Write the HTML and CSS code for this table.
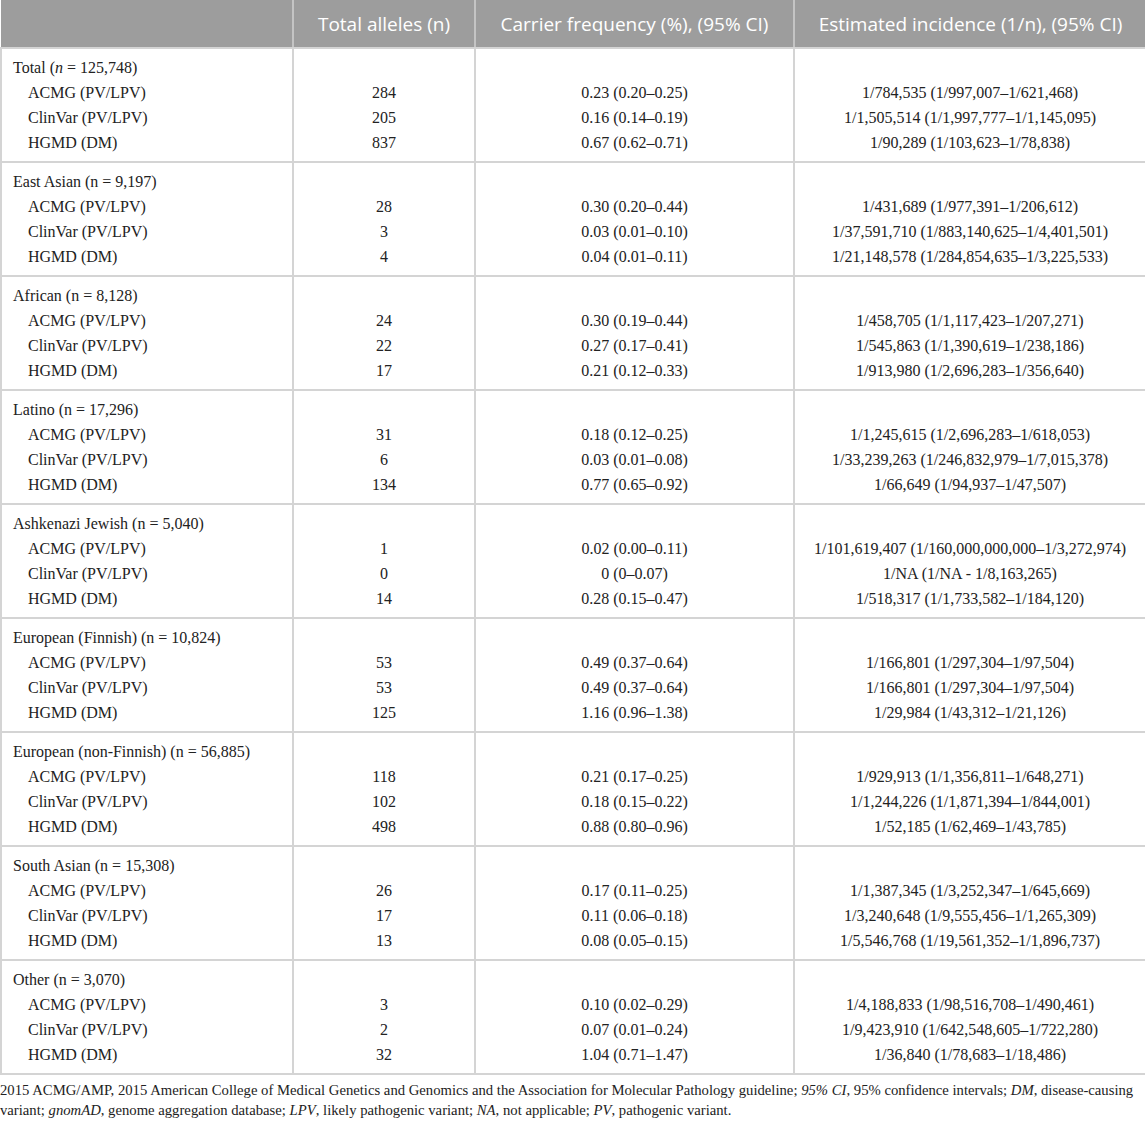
FILE: index.html
```html
<!DOCTYPE html>
<html lang="en">
<head>
<meta charset="utf-8">
<title>Carrier frequency table</title>
<link rel="stylesheet" href="styles.css">
</head>
<body>
<table class="tbl">
  <colgroup>
    <col class="c1"><col class="c2"><col class="c3"><col class="c4">
  </colgroup>
  <thead>
    <tr>
      <th></th>
      <th>Total alleles (n)</th>
      <th>Carrier frequency (%), (95% CI)</th>
      <th>Estimated incidence (1/n), (95% CI)</th>
    </tr>
  </thead>
  <tbody>
    <tr>
      <td class="lab"><div class="grp">Total (<i>n</i> = 125,748)</div><div class="sub">ACMG (PV/LPV)</div><div class="sub">ClinVar (PV/LPV)</div><div class="sub">HGMD (DM)</div></td>
      <td class="num"><div class="ln"></div><div class="ln">284</div><div class="ln">205</div><div class="ln">837</div></td>
      <td class="num"><div class="ln"></div><div class="ln">0.23 (0.20–0.25)</div><div class="ln">0.16 (0.14–0.19)</div><div class="ln">0.67 (0.62–0.71)</div></td>
      <td class="num"><div class="ln"></div><div class="ln">1/784,535 (1/997,007–1/621,468)</div><div class="ln">1/1,505,514 (1/1,997,777–1/1,145,095)</div><div class="ln">1/90,289 (1/103,623–1/78,838)</div></td>
    </tr>
    <tr>
      <td class="lab"><div class="grp">East Asian (n = 9,197)</div><div class="sub">ACMG (PV/LPV)</div><div class="sub">ClinVar (PV/LPV)</div><div class="sub">HGMD (DM)</div></td>
      <td class="num"><div class="ln"></div><div class="ln">28</div><div class="ln">3</div><div class="ln">4</div></td>
      <td class="num"><div class="ln"></div><div class="ln">0.30 (0.20–0.44)</div><div class="ln">0.03 (0.01–0.10)</div><div class="ln">0.04 (0.01–0.11)</div></td>
      <td class="num"><div class="ln"></div><div class="ln">1/431,689 (1/977,391–1/206,612)</div><div class="ln">1/37,591,710 (1/883,140,625–1/4,401,501)</div><div class="ln">1/21,148,578 (1/284,854,635–1/3,225,533)</div></td>
    </tr>
    <tr>
      <td class="lab"><div class="grp">African (n = 8,128)</div><div class="sub">ACMG (PV/LPV)</div><div class="sub">ClinVar (PV/LPV)</div><div class="sub">HGMD (DM)</div></td>
      <td class="num"><div class="ln"></div><div class="ln">24</div><div class="ln">22</div><div class="ln">17</div></td>
      <td class="num"><div class="ln"></div><div class="ln">0.30 (0.19–0.44)</div><div class="ln">0.27 (0.17–0.41)</div><div class="ln">0.21 (0.12–0.33)</div></td>
      <td class="num"><div class="ln"></div><div class="ln">1/458,705 (1/1,117,423–1/207,271)</div><div class="ln">1/545,863 (1/1,390,619–1/238,186)</div><div class="ln">1/913,980 (1/2,696,283–1/356,640)</div></td>
    </tr>
    <tr>
      <td class="lab"><div class="grp">Latino (n = 17,296)</div><div class="sub">ACMG (PV/LPV)</div><div class="sub">ClinVar (PV/LPV)</div><div class="sub">HGMD (DM)</div></td>
      <td class="num"><div class="ln"></div><div class="ln">31</div><div class="ln">6</div><div class="ln">134</div></td>
      <td class="num"><div class="ln"></div><div class="ln">0.18 (0.12–0.25)</div><div class="ln">0.03 (0.01–0.08)</div><div class="ln">0.77 (0.65–0.92)</div></td>
      <td class="num"><div class="ln"></div><div class="ln">1/1,245,615 (1/2,696,283–1/618,053)</div><div class="ln">1/33,239,263 (1/246,832,979–1/7,015,378)</div><div class="ln">1/66,649 (1/94,937–1/47,507)</div></td>
    </tr>
    <tr>
      <td class="lab"><div class="grp">Ashkenazi Jewish (n = 5,040)</div><div class="sub">ACMG (PV/LPV)</div><div class="sub">ClinVar (PV/LPV)</div><div class="sub">HGMD (DM)</div></td>
      <td class="num"><div class="ln"></div><div class="ln">1</div><div class="ln">0</div><div class="ln">14</div></td>
      <td class="num"><div class="ln"></div><div class="ln">0.02 (0.00–0.11)</div><div class="ln">0 (0–0.07)</div><div class="ln">0.28 (0.15–0.47)</div></td>
      <td class="num"><div class="ln"></div><div class="ln">1/101,619,407 (1/160,000,000,000–1/3,272,974)</div><div class="ln">1/NA (1/NA - 1/8,163,265)</div><div class="ln">1/518,317 (1/1,733,582–1/184,120)</div></td>
    </tr>
    <tr>
      <td class="lab"><div class="grp">European (Finnish) (n = 10,824)</div><div class="sub">ACMG (PV/LPV)</div><div class="sub">ClinVar (PV/LPV)</div><div class="sub">HGMD (DM)</div></td>
      <td class="num"><div class="ln"></div><div class="ln">53</div><div class="ln">53</div><div class="ln">125</div></td>
      <td class="num"><div class="ln"></div><div class="ln">0.49 (0.37–0.64)</div><div class="ln">0.49 (0.37–0.64)</div><div class="ln">1.16 (0.96–1.38)</div></td>
      <td class="num"><div class="ln"></div><div class="ln">1/166,801 (1/297,304–1/97,504)</div><div class="ln">1/166,801 (1/297,304–1/97,504)</div><div class="ln">1/29,984 (1/43,312–1/21,126)</div></td>
    </tr>
    <tr>
      <td class="lab"><div class="grp">European (non-Finnish) (n = 56,885)</div><div class="sub">ACMG (PV/LPV)</div><div class="sub">ClinVar (PV/LPV)</div><div class="sub">HGMD (DM)</div></td>
      <td class="num"><div class="ln"></div><div class="ln">118</div><div class="ln">102</div><div class="ln">498</div></td>
      <td class="num"><div class="ln"></div><div class="ln">0.21 (0.17–0.25)</div><div class="ln">0.18 (0.15–0.22)</div><div class="ln">0.88 (0.80–0.96)</div></td>
      <td class="num"><div class="ln"></div><div class="ln">1/929,913 (1/1,356,811–1/648,271)</div><div class="ln">1/1,244,226 (1/1,871,394–1/844,001)</div><div class="ln">1/52,185 (1/62,469–1/43,785)</div></td>
    </tr>
    <tr>
      <td class="lab"><div class="grp">South Asian (n = 15,308)</div><div class="sub">ACMG (PV/LPV)</div><div class="sub">ClinVar (PV/LPV)</div><div class="sub">HGMD (DM)</div></td>
      <td class="num"><div class="ln"></div><div class="ln">26</div><div class="ln">17</div><div class="ln">13</div></td>
      <td class="num"><div class="ln"></div><div class="ln">0.17 (0.11–0.25)</div><div class="ln">0.11 (0.06–0.18)</div><div class="ln">0.08 (0.05–0.15)</div></td>
      <td class="num"><div class="ln"></div><div class="ln">1/1,387,345 (1/3,252,347–1/645,669)</div><div class="ln">1/3,240,648 (1/9,555,456–1/1,265,309)</div><div class="ln">1/5,546,768 (1/19,561,352–1/1,896,737)</div></td>
    </tr>
    <tr>
      <td class="lab"><div class="grp">Other (n = 3,070)</div><div class="sub">ACMG (PV/LPV)</div><div class="sub">ClinVar (PV/LPV)</div><div class="sub">HGMD (DM)</div></td>
      <td class="num"><div class="ln"></div><div class="ln">3</div><div class="ln">2</div><div class="ln">32</div></td>
      <td class="num"><div class="ln"></div><div class="ln">0.10 (0.02–0.29)</div><div class="ln">0.07 (0.01–0.24)</div><div class="ln">1.04 (0.71–1.47)</div></td>
      <td class="num"><div class="ln"></div><div class="ln">1/4,188,833 (1/98,516,708–1/490,461)</div><div class="ln">1/9,423,910 (1/642,548,605–1/722,280)</div><div class="ln">1/36,840 (1/78,683–1/18,486)</div></td>
    </tr>
  </tbody>
</table>
<p class="note">2015 ACMG/AMP, 2015 American College of Medical Genetics and Genomics and the Association for Molecular Pathology guideline; <i>95% CI</i>, 95% confidence intervals; <i>DM</i>, disease-causing variant; <i>gnomAD</i>, genome aggregation database; <i>LPV</i>, likely pathogenic variant; <i>NA</i>, not applicable; <i>PV</i>, pathogenic variant.</p>
</body>
</html>
```
FILE: styles.css
```css
html, body {
  margin: 0;
  padding: 0;
  background: #ffffff;
}
body {
  width: 1145px;
  font-family: "Liberation Serif", "Times New Roman", serif;
  color: #222222;
}
.tbl {
  width: 1145px;
  border-collapse: collapse;
  table-layout: fixed;
}
.c1 { width: 292px; }
.c2 { width: 182px; }
.c3 { width: 319px; }
.c4 { width: 352px; }
.tbl th {
  background: #9d9d9d;
  color: #ffffff;
  font-family: "Open Sans", "Liberation Sans", sans-serif;
  font-weight: 400;
  font-size: 19px;
  height: 47px;
  padding: 0;
  text-align: center;
  vertical-align: middle;
  border-left: 2px solid #c4c4c4;
  border-bottom: 2px solid #d4d4d4;
}
.tbl th:first-child { border-left: none; }
.tbl td {
  border: 2px solid #d4d4d4;
  padding: 6px 0 6px;
  vertical-align: top;
  font-size: 16px;
}
.ln, .grp, .sub {
  height: 25px;
  line-height: 25px;
  white-space: nowrap;
}
.grp { padding-left: 11px; }
.sub { padding-left: 26px; }
.num { text-align: center; }
.note {
  margin: 5px 0 0;
  font-size: 14.7px;
  line-height: 20px;
  color: #222222;
}
```
